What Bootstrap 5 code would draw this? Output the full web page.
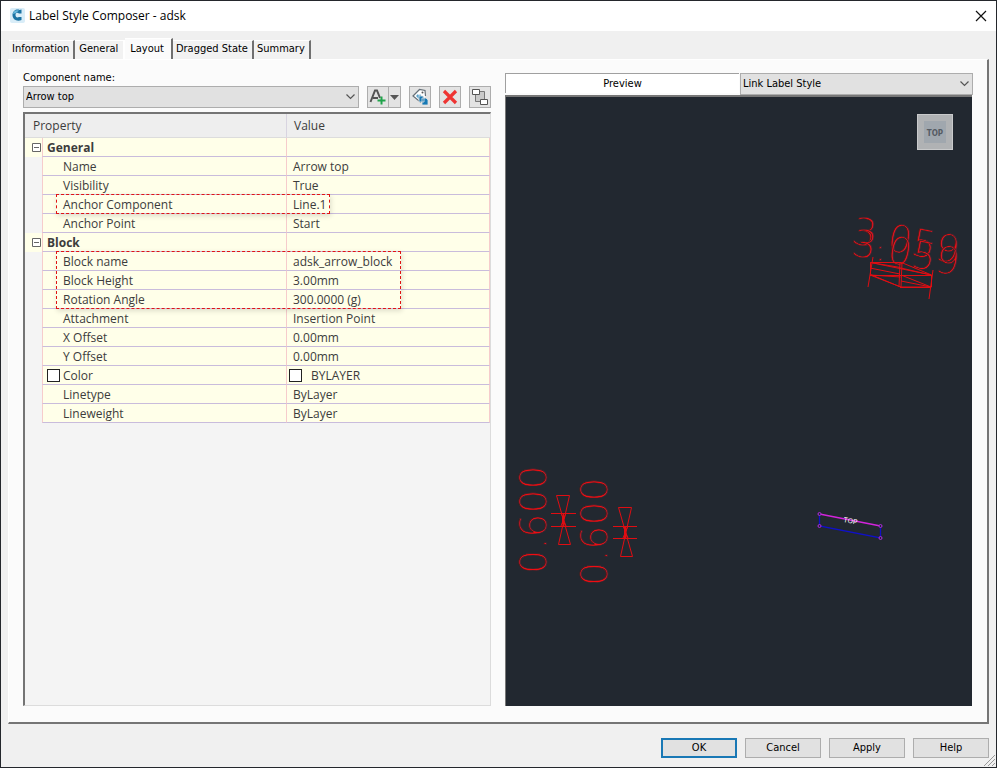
<!DOCTYPE html>
<html lang="en">
<head>
<meta charset="utf-8">
<meta name="viewport" content="width=device-width, initial-scale=1">
<title>Label Style Composer - adsk</title>
<link rel="stylesheet" href="https://cdn.jsdelivr.net/npm/bootstrap@5.3.0/dist/css/bootstrap.min.css">
<style>
body{font:11px/16px "DejaVu Sans Condensed","Noto Sans",sans-serif;color:#000;background:#f0f0f0}
.dialog{border:1px solid #24272c}
.titlebar{height:30px;background:#fff;font:12px/16px "Open Sans",sans-serif;padding:0 9px 0 8px}
.icon-btn{border:0;background:none;padding:0;line-height:0}
.tabs{padding:7px 0 0 8px}
.tabs .nav-link{color:#000;border:0;border-radius:0;border-top:1px solid #fff;border-right:2px solid #707070;height:19px;padding:0 4px 0 3px;background:#f2f2f2;line-height:16px;margin-top:2px}
.tabs .nav-link.active{background:#fbfbfb;height:22px;margin:0 0 -1px;padding:0 7px 0 5px;line-height:20px}
.tabs .nav-link.flush{border-right-color:#fff;padding:0 5px 0 4px}
.sheet{margin:0 7px 0 7px;border:1px solid #fff;border-right:2px solid #757575;border-bottom:2px solid #757575;background:#fbfbfb;padding:10px 14px 16px 14px;min-height:0}
.split{gap:14px;min-height:0}
.pane{flex:1 1 0;min-width:0;min-height:0}
.view-pane{padding-top:3px}
.drop{appearance:none;border:1px solid #adadad;border-radius:0;height:22px;padding:0 20px 0 2px;font:inherit;color:#000;background:#e1e1e1}
.drop-box{position:relative}
.drop-box svg{position:absolute;right:4px;top:8px;pointer-events:none}
.tool{height:22px;width:22px;border:1px solid #adadad;background:#e3e3e3;padding:0;line-height:0;display:flex;align-items:center;justify-content:center;border-radius:0}
.tool.more{width:13px}
.more{margin-left:-1px}
.grid-box{border:1px solid #dcdcdc;border-top:2px solid #747474;border-left:2px solid #747474;background:#f4f4f4;margin-top:4px}
.props{width:100%;table-layout:fixed;border-collapse:separate;border-spacing:0;font:12px/16px "Open Sans",sans-serif;color:#3c3c3c}
.props th,.props td{padding:0;height:19px;line-height:16px;white-space:nowrap}
.props thead th{height:24px;font-weight:400;background:#eee;border-bottom:1px solid #dcdcdc;padding-left:8px}
.props thead th+th{border-left:1px solid #d8d4e0;padding-left:7px}
.props tbody th,.props tbody .val{background:#ffffe9;border-bottom:1px solid #c9bcdc;border-left:1px solid #f6cccc;padding-top:2px}
.props tbody .val{border-right:1px solid #f6cccc;padding-left:6px}
.props tbody th{font-weight:400;padding-left:20px;position:relative}
.props .group th{font-weight:700;padding-left:4px}
.props .group .fold{background:#ffffe9;padding-left:7px}
.c1{width:17px}.c2{width:244px}
.fold button{display:block}
.swatch{display:inline-block;width:13px;height:13px;border:1px solid #222;background:#fff;vertical-align:-2px}
th .swatch{margin:0 3px 0 -16px}
.val .swatch{margin:0 9px 0 -4px}
.callout{position:absolute;left:13px;top:-1px;height:20px;width:274px;border:1px dashed #e01414;z-index:1;box-shadow:1px 2px 5px #0002;pointer-events:none}
.callout.tall{height:58px;width:345px}
.preview-tab{border-top:1px solid #a0a0a0;border-left:1px solid #a0a0a0;background:#fff;height:20px;line-height:20px;margin-right:1px}
.preview{background:#222830;border-top:2px solid #777;border-left:1px solid #777;margin-right:1px;min-height:0}
.cad{font-family:"DejaVu Sans Light","DejaVu Sans",sans-serif;font-weight:200;font-size:38px;fill:#f00d12;stroke:#222830;stroke-width:.6}
.actions{padding:14px 7px 9px;gap:8px}
.push{width:76px;height:20px;border:1px solid #adadad;background:#e1e1e1;padding:0;font:inherit;border-radius:0}
.push.main{border:2px solid #1978b5}
.grip{position:absolute;right:1px;bottom:1px}
</style>
</head>
<body>
<main class="dialog vh-100 d-flex flex-column position-relative">
<header class="titlebar d-flex align-items-center">
<svg width="16" height="16" viewBox="0 0 16 16" aria-hidden="true"><rect x="1" width="15" height="15" rx="2" fill="#d9edf8"/><path d="M12.500 1.500v4H10C8 4 6.500 5 6.500 7S8 10 10 9h2.500v3C8 14 3.500 11.500 3.500 7S8 .5 10.500 2z" fill="#1b73a3"/><path d="M4 6C4 3 7 1.500 10 2.500L7 5z" fill="#69b9dd"/></svg>
<span class="ms-1 flex-grow-1">Label Style Composer - adsk</span>
<button class="icon-btn" aria-label="Close"><svg width="12" height="12" viewBox="0 0 12 12"><path d="M1 1l10 10M11 1L1 11" stroke="#111" stroke-width="1.200"/></svg></button>
</header>
<nav class="nav tabs flex-nowrap">
<a class="nav-link" href="#">Information</a><a class="nav-link flush" href="#">General</a><a class="nav-link active" href="#" aria-current="page">Layout</a><a class="nav-link" href="#">Dragged State</a><a class="nav-link" href="#">Summary</a>
</nav>
<section class="sheet flex-grow-1 d-flex">
<div class="split d-flex flex-grow-1">
<div class="pane d-flex flex-column">
<label for="component">Component name:</label>
<div class="d-flex gap-2 align-items-start">
<div class="drop-box flex-grow-1"><select id="component" class="drop w-100"><option>Arrow top</option></select><svg width="9" height="6" viewBox="0 0 9 6"><path d="M.5.500l4 4 4-4" fill="none" stroke="#555" stroke-width="1.200"/></svg></div>
<div class="d-flex">
<button class="tool" aria-label="Add text component"><svg width="18" height="18" viewBox="0 0 18 18"><path d="M1.500 14L6 2.500h2l3 7.500M4 10h5" fill="none" stroke="#555" stroke-width="2"/><path d="M12.500 8.500v8M8.500 12.500h8" stroke="#20a44b" stroke-width="2"/></svg></button>
<button class="tool more" aria-label="Component types"><svg width="9" height="5" viewBox="0 0 9 5"><path d="M0 0h9L4.500 5z" fill="#555"/></svg></button>
</div>
<button class="tool" aria-label="Copy component"><svg width="18" height="18" viewBox="0 0 18 18"><path d="M10 14.500L2 8l6.500-6.500 5.500 1L14.500 8" fill="#fff" stroke="#667078" stroke-width="1.200"/><circle cx="11.500" cy="4.500" r="1" fill="#555"/><path d="M5 8l2-2 1 2 1-2 2 3-3 2z" fill="#5ba4cd"/><path d="M8 8h4l1 2v4H8zM11 10h4l2 2v5h-6z" fill="#1679b5" stroke="#e3e3e3" stroke-width=".8"/></svg></button>
<button class="tool" aria-label="Delete component"><svg width="16" height="16" viewBox="0 0 16 16"><path d="M2 2l12 12M14 2L2 14" stroke="#ee3432" stroke-width="3.200"/></svg></button>
<button class="tool" aria-label="Component draw order"><svg width="18" height="18" viewBox="0 0 18 18"><path d="M4.500 3.500h9v10h-9z" fill="#c9c9c9" stroke="#777"/><path d="M1.500 1.500h7v5h-7zM9.500 11.500h7v5h-7z" fill="#fff" stroke="#555"/></svg></button>
</div>
<div class="grid-box flex-grow-1">
<table class="props">
<colgroup><col class="c1"><col class="c2"><col></colgroup>
<thead><tr><th colspan="2" scope="col">Property</th><th scope="col">Value</th></tr></thead>
<tbody>
<tr class="group"><td class="fold"><button class="icon-btn" aria-label="Collapse General"><svg width="9" height="9" viewBox="0 0 9 9"><path d="M.5.500h8v8h-8zM2 4.500h5" fill="#fff" stroke="#666"/></svg></button></td><th scope="row">General</th><td class="val"></td></tr>
<tr><td></td><th scope="row">Name</th><td class="val">Arrow top</td></tr>
<tr><td></td><th scope="row">Visibility</th><td class="val">True</td></tr>
<tr><td></td><th scope="row">Anchor Component<span class="callout"></span></th><td class="val">Line.1</td></tr>
<tr><td></td><th scope="row">Anchor Point</th><td class="val">Start</td></tr>
<tr class="group"><td class="fold"><button class="icon-btn" aria-label="Collapse Block"><svg width="9" height="9" viewBox="0 0 9 9"><path d="M.5.500h8v8h-8zM2 4.500h5" fill="#fff" stroke="#666"/></svg></button></td><th scope="row">Block</th><td class="val"></td></tr>
<tr><td></td><th scope="row">Block name<span class="callout tall"></span></th><td class="val">adsk_arrow_block</td></tr>
<tr><td></td><th scope="row">Block Height</th><td class="val">3.00mm</td></tr>
<tr><td></td><th scope="row">Rotation Angle</th><td class="val">300.0000 (g)</td></tr>
<tr><td></td><th scope="row">Attachment</th><td class="val">Insertion Point</td></tr>
<tr><td></td><th scope="row">X Offset</th><td class="val">0.00mm</td></tr>
<tr><td></td><th scope="row">Y Offset</th><td class="val">0.00mm</td></tr>
<tr><td></td><th scope="row"><span class="swatch"></span>Color</th><td class="val"><span class="swatch"></span>BYLAYER</td></tr>
<tr><td></td><th scope="row">Linetype</th><td class="val">ByLayer</td></tr>
<tr><td></td><th scope="row">Lineweight</th><td class="val">ByLayer</td></tr>
</tbody>
</table>
</div>
</div>
<div class="pane view-pane d-flex flex-column">
<div class="d-flex">
<div class="pane preview-tab text-center">Preview</div>
<div class="pane drop-box"><select class="drop w-100" aria-label="Preview style"><option>Link Label Style</option></select><svg width="9" height="6" viewBox="0 0 9 6"><path d="M.5.500l4 4 4-4" fill="none" stroke="#555" stroke-width="1.200"/></svg></div>
</div>
<div class="preview flex-grow-1">
<svg class="d-block w-100 h-100" viewBox="506 97 466 609" role="img" aria-label="Label preview">
<rect x="917.500" y="114.500" width="35" height="35" fill="#b0b2b4" stroke="#c9cacb"/><rect x="924" y="121" width="22" height="22" fill="#a0a7ae"/>
<text x="935" y="136" text-anchor="middle" font-family="DejaVu Sans Condensed,sans-serif" font-size="8" font-weight="700" fill="#555b63">TOP</text>
<g class="cad">
<text transform="translate(546 574) rotate(-90)">0.600</text>
<text transform="translate(607 586) rotate(-90)">0.600</text>
<text transform="translate(850 243) rotate(11)">3.059</text>
<text transform="translate(850 255) rotate(11)">3.059</text>
</g>
<g fill="none" stroke="#e00d12">
<path d="M556.500 495.500h13l-11 49h12zM551 513.500h25M551 526.500h25M561 513l5 13M566 513l-5 13M563.500 513v13M562.500 516v8"/>
<path d="M618.500 507.500h13l-11 49h12zM613 526.500h24M613 538.500h24M623 526l5 12M628 526l-5 12M625.500 526v12M624.500 527v11"/>
<path d="M870.500 262.500h31l30 12.500v12h-31l-30-12.500zM870 275.500h61M870.500 262.500l61 12.500M870.500 262.500l30 5M870.500 275l30 2M900 262l-1 25M902 262l-1 25M901 275l30 12M870 268l30 6M901 268l30 7M901 287l-31-12M901 281l30 6M900 287.500h31M873 257l-5 30M933 270l-4 29"/>
</g>
<path d="M819.500 514v12l61 12v-12" fill="none" stroke="#1010c8" stroke-width="1.300"/><path d="M819.500 514l61 12" stroke="#d324dc" stroke-width="1.300"/>
<g fill="#222830" stroke="#b32be0"><circle cx="819.500" cy="514" r="1.500"/><circle cx="819.500" cy="526" r="1.500"/><circle cx="880.500" cy="526" r="1.500"/><circle cx="880.500" cy="538" r="1.500"/></g>
<text transform="translate(843 522) rotate(11)" font-family="Inter" font-size="7" fill="#fff">TOP</text>
</svg>
</div>
</div>
</div>
</section>
<footer class="actions d-flex justify-content-end">
<button class="push main">OK</button><button class="push">Cancel</button><button class="push">Apply</button><button class="push">Help</button>
</footer>
<svg class="grip" width="11" height="11" viewBox="0 0 11 11" aria-hidden="true"><path d="M0 11L11 0M4 11l7-7M8 11l3-3" stroke="#999"/></svg>
</main>
<script src="https://cdn.jsdelivr.net/npm/bootstrap@5.3.0/dist/js/bootstrap.bundle.min.js"></script>
</body>
</html>
